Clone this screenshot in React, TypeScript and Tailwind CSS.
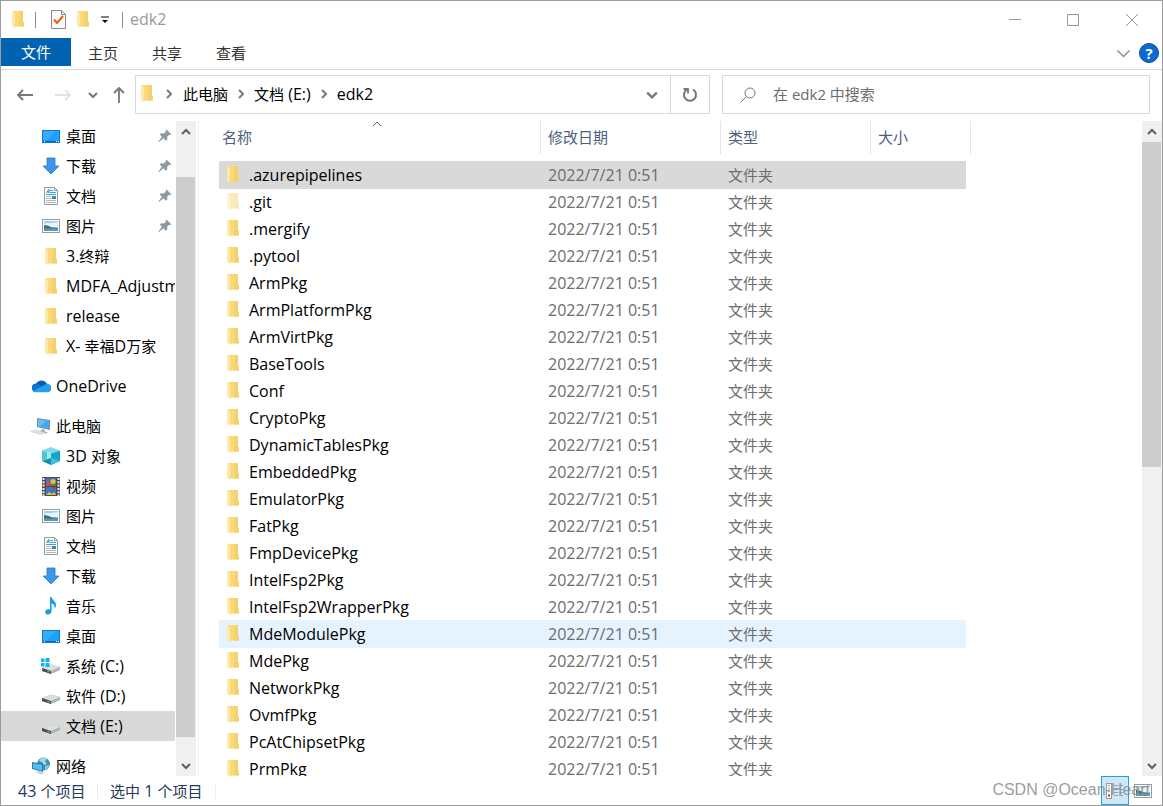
import type { ReactNode } from "react";

const folders = [
  ".azurepipelines",
  ".git",
  ".mergify",
  ".pytool",
  "ArmPkg",
  "ArmPlatformPkg",
  "ArmVirtPkg",
  "BaseTools",
  "Conf",
  "CryptoPkg",
  "DynamicTablesPkg",
  "EmbeddedPkg",
  "EmulatorPkg",
  "FatPkg",
  "FmpDevicePkg",
  "IntelFsp2Pkg",
  "IntelFsp2WrapperPkg",
  "MdeModulePkg",
  "MdePkg",
  "NetworkPkg",
  "OvmfPkg",
  "PcAtChipsetPkg",
  "PrmPkg",
];

// Han characters are set one pixel smaller than Latin ones
function Mixed({ text }: { text: string }) {
  return (
    <span className="whitespace-pre">
      {text.split(/([\u4e00-\u9fff]+)/).map((part, i) =>
        i % 2 ? (
          <span key={i} className="text-[15px]">
            {part}
          </span>
        ) : (
          part
        ),
      )}
    </span>
  );
}

function FolderIcon({ faded = false }: { faded?: boolean }) {
  return (
    <svg width="12" height="17" viewBox="0 0 12 17" className={faded ? "shrink-0 opacity-50" : "shrink-0"}>
      <path d="M1 0h10v10.500l1 1V15.500H2z" fill="#f9d978" />
      <path d="M8 0h3v10.500l1 1V15.500H7z" fill="#f5d06c" />
      <path d="M0 .5l3.600 1.500v9l-.6 5.500L0 15z" fill="#ffe9a8" />
      <path d="M3.600 2v9l-.6 5.500" stroke="#f3cf73" strokeWidth=".5" fill="none" />
    </svg>
  );
}

type ChevronProps = { dir: "up" | "down" | "right"; size?: number; width?: number; className?: string };

function Chevron({ dir, size = 10, width = 2, className = "text-[#5f5f5f]" }: ChevronProps) {
  const d = { up: "M1 7l4-4 4 4", down: "M1 3l4 4 4-4", right: "M3 1l4 4-4 4" }[dir];
  return (
    <svg width={size} height={size} viewBox="0 0 10 10" className={`shrink-0 ${className}`}>
      <path d={d} fill="none" stroke="currentColor" strokeWidth={width} />
    </svg>
  );
}

function DesktopIcon() {
  return (
    <svg width="18" height="13" viewBox="0 0 18 13">
      <rect x=".5" y=".5" width="17" height="12" fill="#1ba1fb" stroke="#1278cf" />
      <path d="M1 1h13L5 10H1z" fill="#33adff" />
      <path d="M1 11.500h16" stroke="#0b66b2" />
      <path d="M2 11.500h1M14 11.500h1M16 11.500h1" stroke="#fff" />
    </svg>
  );
}

function DownloadIcon() {
  return (
    <svg width="18" height="18" viewBox="0 0 18 18">
      <path d="M5 1h8v8h4l-8 8-8-8h4z" fill="#3c97e8" stroke="#2578c4" strokeWidth=".8" />
    </svg>
  );
}

function DocumentIcon() {
  return (
    <svg width="18" height="18" viewBox="0 0 18 18">
      <path d="M2.500.5h10l3 3v14h-13z" fill="#fff" stroke="#939b9f" />
      <path d="M12.500.5v3h3" fill="none" stroke="#939b9f" />
      <path d="M4.500 6l2-3.500h.5V6M5.500 5H7" stroke="#1e8fd5" fill="none" />
      <path d="M8 3.500h3M8 5.500h6M4 7.500h10" stroke="#3ba3e4" />
      <path d="M4 9.500h5M4 11.500h5M4 13.500h10M4 15.500h10" stroke="#b1b9bd" />
      <rect x="10" y="9" width="4" height="3" fill="#3b8fc9" />
      <path d="M10 11.500h4" stroke="#3f7d62" />
    </svg>
  );
}

function PictureIcon() {
  return (
    <svg width="18" height="14" viewBox="0 0 18 14">
      <rect x=".5" y=".5" width="17" height="13" fill="#fff" stroke="#969da1" />
      <rect x="2" y="2" width="14" height="10" fill="#9fcff5" />
      <path d="M2 5c3-2 6 0 8-1s4 0 6-1v5H2z" fill="#e6f4fd" />
      <path d="M2 6c3 0 5 1 8 2.500l6 .5v1H2z" fill="#3c7365" />
      <path d="M2 9.500h14V12H2z" fill="#5b96bd" />
    </svg>
  );
}

function OneDriveIcon() {
  return (
    <svg width="20" height="14" viewBox="0 0 20 14">
      <path d="M5 5a6 6 0 0 1 11 0l-4 4-7-2z" fill="#0a5cb3" />
      <path d="M4.500 13a4.300 4.300 0 0 1 0-8.500c2 0 3 .8 4.500 1.700L15 10l-4 3z" fill="#0b74cf" />
      <path d="M1.700 12.200L12.500 6.500a5 5 0 0 1 4-1.700A4.200 4.200 0 0 1 16 13.200H4.500c-1 0-2-.4-2.800-1z" fill="#259fec" />
    </svg>
  );
}

function ComputerIcon() {
  return (
    <svg width="20" height="18" viewBox="0 0 20 18">
      <path d="M6 1l13 2v10L6 10z" fill="#7593a6" />
      <path d="M7 2.200l11 1.700v7.800L7 9.200z" fill="#43a9f0" />
      <path d="M7 2.200l8 1.200-6 6.300-2-.5z" fill="#66bdf7" />
      <path d="M11 12l3 .8v2l3 .7-2 1-6-1.500z" fill="#a6afb5" />
      <path d="M0 14.500l4-1.500 10 2.500-4 2z" fill="#dfe3e6" stroke="#bac1c6" strokeWidth=".5" />
    </svg>
  );
}

function CubeIcon() {
  return (
    <svg width="18" height="18" viewBox="0 0 18 18">
      <path d="M9 0l9 3.500-9 3-9-3z" fill="#7fdbe8" />
      <path d="M0 3.500l9 3V18l-9-4z" fill="#a5e8ef" />
      <path d="M18 3.500l-9 3V18l9-4z" fill="#12a5c4" />
      <path d="M0 14l9-3v7z" fill="#0e93a8" />
      <path d="M9 11l9 3-9 4z" fill="#3cc3da" />
      <path d="M0 3.500l5 1.700V12.300L0 14z" fill="#4fc6d6" />
    </svg>
  );
}

function VideoIcon() {
  return (
    <svg width="18" height="19" viewBox="0 0 18 19">
      <path d="M0 0h18v19H0z" fill="#4c4c4c" />
      <path d="M1.500 1v18M16.500 1v18" stroke="#f1f1f1" strokeWidth="2" strokeDasharray="2 1.300" />
      <path d="M4 1h10v8H4zM4 10h10v8H4z" fill="#3b74d1" />
      <path d="M4 6l3-2 2 3-1 2H4z" fill="#d84c39" />
      <circle cx="11" cy="4.500" r="2.500" fill="#e8c229" />
      <path d="M9 7h5v2H9z" fill="#3d923e" />
      <path d="M10 10h4l-2 4z" fill="#c9342b" />
      <path d="M4 18l3-3 3 2 2-2 2 3z" fill="#e8c229" />
    </svg>
  );
}

function MusicIcon() {
  return (
    <svg width="18" height="18" viewBox="0 0 18 18">
      <path
        d="M8 0h1.500c.5 3 4.500 4 4.500 8 0 1.500-.5 2.500-1.500 3.500.6-3-.8-4.500-3-5V14c0 2-1.500 3.500-3.700 3.500S3 16 3.300 14.500C3.700 12.800 6 11.800 8 12.500z"
        fill="#139cf0"
      />
    </svg>
  );
}

function DriveIcon({ system = false }: { system?: boolean }) {
  return (
    <svg width="20" height="18" viewBox="0 0 20 18">
      <path d="M1 11l9-3.500 9 2.500v3l-9 4-9-3z" fill="#aeb2b4" />
      <path d="M1 11l9-3.500 9 2.500-9 4z" fill="#dcdedf" />
      <path d="M1 11l9 3v3l-9-3z" fill="#4a4e50" />
      <path d="M6.500 13.600l2 .6v1.300l-2-.6z" fill="#3fdc4b" />
      {system && <path d="M0 1.500h3.500V5H0zM4.500 1h4v4h-4zM0 6h3.500v3.500H0zM4.500 6h4v4h-4z" fill="#10b3f0" />}
    </svg>
  );
}

function NetworkIcon() {
  return (
    <svg width="20" height="18" viewBox="0 0 20 18">
      <circle cx="12.500" cy="7" r="6.500" fill="#3c8fb8" />
      <path d="M8 4c2-4 6-4 8-2l-2 2 2 3-3 1-2-3z" fill="#a7d8dc" />
      <path d="M14 9l4-1c0 3-2 4-4 5z" fill="#8fc7d9" />
      <path d="M1 5l11 2v8L1 12z" fill="#2b78ad" />
      <path d="M2 6.200l9 1.600v5.900L2 11.200z" fill="#52bdf7" />
      <path d="M4 15l4-1 6 2-4 1.500z" fill="#c9d2d8" />
    </svg>
  );
}

function PinIcon() {
  return (
    <svg width="14" height="14" viewBox="0 0 14 14" className="mr-[3px] shrink-0">
      <path
        d="M8.500.5l5 5-1.500.6-.8-.3-2 2 .1 2.700-1.300 1.300-2.600-2.600L1 13l-.6-.4 3.500-4.800L1.700 5.500 3 4.300l2.900.2 2-2-.2-.8z"
        fill="#8e9aa3"
      />
    </svg>
  );
}

type NavItem = { label: string; icon: ReactNode; pinned?: boolean; current?: boolean };

const quickAccess: NavItem[] = [
  { label: "桌面", icon: <DesktopIcon />, pinned: true },
  { label: "下载", icon: <DownloadIcon />, pinned: true },
  { label: "文档", icon: <DocumentIcon />, pinned: true },
  { label: "图片", icon: <PictureIcon />, pinned: true },
  { label: "3.终辩", icon: <FolderIcon /> },
  { label: "MDFA_Adjustment", icon: <FolderIcon /> },
  { label: "release", icon: <FolderIcon /> },
  { label: "X- 幸福D万家", icon: <FolderIcon /> },
];

const thisPc: NavItem[] = [
  { label: "3D 对象", icon: <CubeIcon /> },
  { label: "视频", icon: <VideoIcon /> },
  { label: "图片", icon: <PictureIcon /> },
  { label: "文档", icon: <DocumentIcon /> },
  { label: "下载", icon: <DownloadIcon /> },
  { label: "音乐", icon: <MusicIcon /> },
  { label: "桌面", icon: <DesktopIcon /> },
  { label: "系统 (C:)", icon: <DriveIcon system /> },
  { label: "软件 (D:)", icon: <DriveIcon /> },
  { label: "文档 (E:)", icon: <DriveIcon />, current: true },
];

function NavRow({ item, root = false }: { item: NavItem; root?: boolean }) {
  return (
    <li>
      <a
        href="#"
        className={`flex h-[30px] items-center gap-[5px] overflow-hidden ${root ? "pl-[30px]" : "pl-10"} ${item.current ? "bg-[#d9d9d9]" : ""}`}
      >
        <span className="flex w-5 shrink-0 items-center justify-center">{item.icon}</span>
        <span className="grow">
          <Mixed text={item.label} />
        </span>
        {item.pinned && <PinIcon />}
      </a>
    </li>
  );
}

function ScrollBar({ label, children }: { label: string; children: ReactNode }) {
  return (
    <div aria-label={label} className="flex w-5 shrink-0 flex-col bg-[#f0f0f0] pr-px">
      <button aria-label="向上滚动" className="flex h-[21px] shrink-0 items-center justify-center">
        <Chevron dir="up" />
      </button>
      <div className="flex grow flex-col">{children}</div>
      <button aria-label="向下滚动" className="flex h-[21px] shrink-0 items-center justify-center">
        <Chevron dir="down" />
      </button>
    </div>
  );
}

function TitleBar() {
  return (
    <header className="flex h-[37px] shrink-0 items-center text-[#999]">
      <div className="flex grow items-center pl-[11px]">
        <FolderIcon />
        <span className="ml-[11px] h-4 w-px bg-[#8a8a8a]" />
        <button aria-label="属性" className="ml-[15px]">
          <svg width="15" height="19" viewBox="0 0 15 19">
            <path d="M.5.5h10l4 4v14H.5z" fill="#fafafa" stroke="#8a8a8a" />
            <path d="M10.500.5v4h4" fill="none" stroke="#8a8a8a" />
            <path d="M3 9.500l3 3.500 6-7" fill="none" stroke="#f0591e" strokeWidth="2" />
          </svg>
        </button>
        <button aria-label="新建文件夹" className="ml-[11px]">
          <FolderIcon />
        </button>
        <button aria-label="自定义快速访问工具栏" className="ml-3 text-black">
          <svg width="8" height="8" viewBox="0 0 8 8">
            <path d="M0 1h8" stroke="currentColor" />
            <path d="M1 4h6L4 7z" fill="currentColor" />
          </svg>
        </button>
        <span className="ml-[13px] h-4 w-px bg-[#8a8a8a]" />
        <h1 className="ml-[7px] pb-0.5">edk2</h1>
      </div>
      <button aria-label="最小化" className="flex h-full w-[58px] items-center justify-center">
        <svg width="12" height="12" viewBox="0 0 12 12">
          <path d="M0 5.500h12" stroke="currentColor" />
        </svg>
      </button>
      <button aria-label="最大化" className="flex h-full w-[58px] items-center justify-center">
        <svg width="12" height="12" viewBox="0 0 12 12">
          <rect x=".5" y=".5" width="11" height="11" fill="none" stroke="currentColor" />
        </svg>
      </button>
      <button aria-label="关闭" className="flex h-full w-[60px] items-center justify-center">
        <svg width="12" height="12" viewBox="0 0 12 12">
          <path d="M0 0l12 12M12 0L0 12" stroke="currentColor" />
        </svg>
      </button>
    </header>
  );
}

function RibbonTabs() {
  return (
    <div className="flex h-8 shrink-0 items-start border-b border-[#dadada] text-[15px] text-[#333]">
      <button className="h-7 w-[70px] bg-[#0063b1] text-white">文件</button>
      <button className="h-7 w-16 pt-0.5">主页</button>
      <button className="h-7 w-16 pt-0.5">共享</button>
      <button className="h-7 w-16 pt-0.5">查看</button>
      <div className="flex h-7 grow items-center justify-end gap-2 pr-[3px] pt-0.5">
        <button aria-label="展开功能区">
          <Chevron dir="down" size={15} width={1} className="text-[#8f8f8f]" />
        </button>
        <button
          aria-label="帮助"
          className="flex size-5 items-center justify-center rounded-full border border-[#0a4c94] bg-[#0a6cd0] text-[15px] font-bold text-white"
        >
          ?
        </button>
      </div>
    </div>
  );
}

function AddressRow() {
  return (
    <div className="flex shrink-0 gap-3 pt-[5px] pr-3">
      <div className="flex grow">
        <div className="flex w-[134px] items-center text-[#777]">
          <button aria-label="后退" className="ml-4">
            <svg width="16" height="12" viewBox="0 0 16 12">
              <path d="M16 6H1M6 1L1 6l5 5" fill="none" stroke="currentColor" strokeWidth="1.800" />
            </svg>
          </button>
          <button aria-label="前进" disabled className="ml-[22px] text-[#dcdcdc]">
            <svg width="16" height="12" viewBox="0 0 16 12">
              <path d="M0 6h15M10 1l5 5-5 5" fill="none" stroke="currentColor" strokeWidth="1.500" />
            </svg>
          </button>
          <button aria-label="最近浏览的位置" className="ml-[17px]">
            <Chevron dir="down" className="text-[#777]" />
          </button>
          <button aria-label="向上" className="ml-[15px]">
            <svg width="12" height="16" viewBox="0 0 12 16">
              <path d="M6 16V1M1 6l5-5 5 5" fill="none" stroke="currentColor" strokeWidth="1.800" />
            </svg>
          </button>
        </div>
        <div className="flex h-[39px] grow border border-[#d9d9d9]">
          <nav aria-label="地址" className="flex grow items-center pl-[5px] pb-0.5">
            <FolderIcon />
            <Chevron dir="right" className="mx-[11px] text-[#777]" />
            <a href="#" className="-ml-0.5">
              <Mixed text="此电脑" />
            </a>
            <Chevron dir="right" className="mx-2 text-[#777]" />
            <a href="#">
              <Mixed text="文档 (E:)" />
            </a>
            <Chevron dir="right" className="mx-2 text-[#777]" />
            <a href="#">edk2</a>
          </nav>
          <button aria-label="以前的位置" className="flex w-9 items-center justify-center">
            <Chevron dir="down" size={12} className="text-[#777]" />
          </button>
          <button aria-label="刷新" className="flex w-[39px] items-center justify-center border-l border-[#d9d9d9] text-[#777]">
            <svg width="16" height="16" viewBox="0 0 16 16">
              <path d="M11 2.500a6 6 0 1 1-6 0" fill="none" stroke="currentColor" strokeWidth="2" />
              <path d="M1.500 2H6v4.500" fill="none" stroke="currentColor" strokeWidth="1.800" />
            </svg>
          </button>
        </div>
      </div>
      <label className="flex h-[39px] w-[428px] items-center border border-[#d9d9d9] pl-[17px] text-[#777]">
        <svg width="16" height="16" viewBox="0 0 16 16" className="shrink-0">
          <circle cx="10" cy="6" r="5" fill="none" stroke="currentColor" />
          <path d="M6.500 9.500L.5 15.500" stroke="currentColor" />
        </svg>
        <input
          type="search"
          aria-label="搜索"
          placeholder="在 edk2 中搜索"
          className="ml-[17px] min-w-0 grow text-[15px] outline-none placeholder:text-[#6d6d6d]"
        />
      </label>
    </div>
  );
}

function Sidebar() {
  return (
    <aside className="flex w-[198px] shrink-0 gap-px border-r border-[#f0f0f0]">
      <nav aria-label="导航窗格" className="min-w-0 grow overflow-hidden">
        <ul>
          {quickAccess.map((item) => (
            <NavRow key={item.label} item={item} />
          ))}
        </ul>
        <ul className="mt-2.5">
          <NavRow root item={{ label: "OneDrive", icon: <OneDriveIcon /> }} />
        </ul>
        <ul className="mt-2.5">
          <NavRow root item={{ label: "此电脑", icon: <ComputerIcon /> }} />
          {thisPc.map((item) => (
            <NavRow key={item.label} item={item} />
          ))}
        </ul>
        <ul className="mt-2.5">
          <NavRow root item={{ label: "网络", icon: <NetworkIcon /> }} />
        </ul>
      </nav>
      <div className="mr-0.5 flex">
        <ScrollBar label="导航滚动条">
          <div className="h-[35px]" />
          <div className="grow bg-[#cdcdcd]" />
          <div className="h-[18px]" />
        </ScrollBar>
      </div>
    </aside>
  );
}

function rowColor(name: string) {
  if (name === ".azurepipelines") return "bg-[#d9d9d9] shadow-[0_-1px_0_#d9d9d9]";
  if (name === "MdeModulePkg") return "bg-[#e5f3ff] shadow-[0_-1px_0_#e5f3ff]";
  return "";
}

function FileTable() {
  return (
    <div className="min-w-0 grow overflow-hidden pl-5">
      <table className="block text-left">
        <thead className="block text-[15px] text-[#4c607a]">
          <tr className="grid h-[33px] grid-cols-[322px_180px_150px_100px]">
            <th className="relative border-r border-[#e5e5e5] pl-[3px] pt-[5px] font-normal">
              名称
              <Chevron dir="up" width={1} className="absolute -top-0.5 left-[153px] text-[#5f5f5f]" />
            </th>
            <th className="border-r border-[#e5e5e5] pl-[7px] pt-[5px] font-normal">修改日期</th>
            <th className="border-r border-[#e5e5e5] pl-[7px] pt-[5px] font-normal">类型</th>
            <th className="border-r border-[#e5e5e5] pl-[7px] pt-[5px] font-normal">大小</th>
          </tr>
        </thead>
        <tbody className="block pt-2">
          {folders.map((name) => (
            <tr
              key={name}
              className={`grid h-[27px] w-[747px] grid-cols-[322px_180px_1fr] items-center pb-0.5 ${rowColor(name)}`}
            >
              <td className="flex items-center gap-2.5 pl-2">
                <FolderIcon faded={name === ".git"} />
                {name}
              </td>
              <td className="pl-[7px] text-[#6d6d6d]">2022/7/21 0:51</td>
              <td className="pl-[7px] pt-0.5 text-[15px] text-[#6d6d6d]">文件夹</td>
            </tr>
          ))}
        </tbody>
      </table>
    </div>
  );
}

function StatusBar() {
  return (
    <footer className="relative flex h-[29px] shrink-0 items-center text-[#1e395b]">
      <span className="w-[97px] border-r border-[#ececec] pl-[17px] leading-4">
        <Mixed text="43 个项目" />
      </span>
      <span className="border-r border-[#ececec] px-3 leading-4">
        <Mixed text="选中 1 个项目" />
      </span>
      <button
        aria-label="详细信息"
        className="ml-auto flex h-[29px] w-7 items-center justify-center border border-[#26a0da] bg-[#cce8f6]"
      >
        <svg width="18" height="16" viewBox="0 0 18 16">
          <rect x=".5" y=".5" width="5" height="15" fill="#fff" stroke="#9a9a9a" />
          <path d="M2.500 2.500h1M2.500 5.500h1M2.500 8.500h1" stroke="#5c6468" strokeWidth="1.500" />
          <path d="M2 12.500h2" stroke="#c22e1f" strokeWidth="2" />
          <path d="M8 2.500h4M13 2.500h4M8 6.500h4M13 6.500h4M8 9.500h4M13 9.500h4M8 12.500h4M13 12.500h4" stroke="#8fa3b0" />
        </svg>
      </button>
      <button aria-label="大图标" className="mr-2.5 ml-[5px]">
        <PictureIcon />
      </button>
      <span className="pointer-events-none absolute top-0.5 right-3 font-['Liberation_Sans',Arial,sans-serif] text-base text-[#8f8f8f]/90">
        CSDN @Ocean-Heart
      </span>
    </footer>
  );
}

export default function App() {
  return (
    <div className="flex h-screen flex-col overflow-hidden border border-[#9d9d9d] bg-white font-['Open_Sans','Noto_Sans_CJK_SC',sans-serif] text-base text-black">
      <TitleBar />
      <RibbonTabs />
      <AddressRow />
      <main className="mt-[7px] flex min-h-0 grow">
        <Sidebar />
        <FileTable />
        <ScrollBar label="文件滚动条">
          <div className="h-[53%] bg-[#cdcdcd]" />
        </ScrollBar>
      </main>
      <StatusBar />
    </div>
  );
}
